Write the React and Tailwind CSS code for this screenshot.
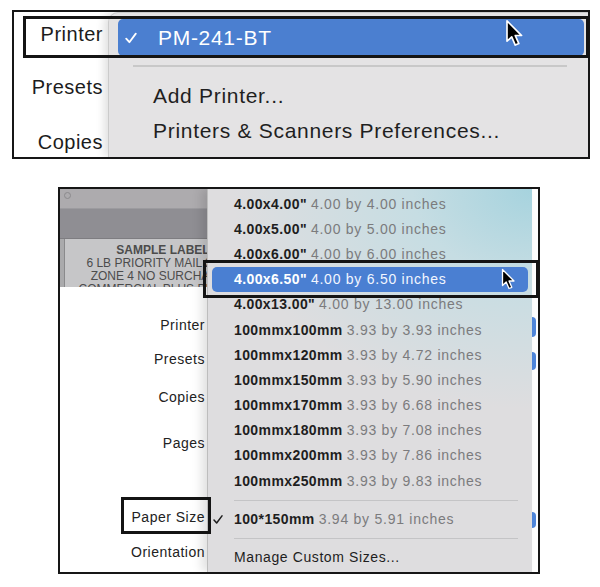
import React from "react";

const Cursor = ({ className }) => (
  <svg className={className} viewBox="0 0 14 22" fill="none">
    <path
      d="M1.5 1.5 L1.5 17.5 L5.2 14 L8 20.5 L10.8 19.3 L8 13 L13 13 Z"
      fill="#000"
      stroke="#fff"
      strokeWidth="1.3"
      strokeLinejoin="round"
    />
  </svg>
);

const Check = ({ className, color }) => (
  <svg className={className} viewBox="0 0 12 12" fill="none">
    <path d="M1.2 6.6 L4.4 10.2 L10.8 1.6" stroke={color} strokeWidth="1.8" strokeLinecap="round" strokeLinejoin="round" />
  </svg>
);

const sizes = [
  ['4.00x4.00"', "4.00 by 4.00 inches"],
  ['4.00x5.00"', "4.00 by 5.00 inches"],
  ['4.00x6.00"', "4.00 by 6.00 inches"],
  ['4.00x6.50"', "4.00 by 6.50 inches", true],
  ['4.00x13.00"', "4.00 by 13.00 inches"],
  ["100mmx100mm", "3.93 by 3.93 inches"],
  ["100mmx120mm", "3.93 by 4.72 inches"],
  ["100mmx150mm", "3.93 by 5.90 inches"],
  ["100mmx170mm", "3.93 by 6.68 inches"],
  ["100mmx180mm", "3.93 by 7.08 inches"],
  ["100mmx200mm", "3.93 by 7.86 inches"],
  ["100mmx250mm", "3.93 by 9.83 inches"],
];

export default function App() {
  return (
    <div className="w-[600px] h-[587px] bg-white relative overflow-hidden font-['Liberation_Sans',Arial,sans-serif]">
      {/* Top panel */}
      <div className="ml-[12px] mt-[10px] w-[578px] h-[149px] border-2 border-[#161616] flex overflow-hidden bg-white">
        <div className="w-[94px] shrink-0 flex flex-col items-end pr-[5px] text-[20px] tracking-[0.5px] text-[#1c1c1c] leading-[24px]">
          <div className="mt-[10px]">Printer</div>
          <div className="mt-[29px]">Presets</div>
          <div className="mt-[31px]">Copies</div>
        </div>
        <div className="flex-1 relative bg-[#e4e3e4] rounded-tl-[10px] border-l border-t border-[#cbcbcb] shadow-[-4px_0_8px_rgba(0,0,0,0.12)] text-[21px] tracking-[0.7px] text-[#1f1f1f]">
          <div className="ml-[9px] mr-[4px] mt-[6px] h-[37px] rounded-[5px] bg-[#4b7fd0] flex items-center text-white">
            <Check className="ml-[7px] w-[12px] h-[12px]" color="#fff" />
            <span className="ml-[21px]">PM-241-BT</span>
          </div>
          <div className="mt-[9px] h-[2px] ml-[24px] w-[434px] bg-[#c8c8c8]" />
          <div className="mt-[14px] h-[30px] leading-[30px] pl-[44px]">Add Printer...</div>
          <div className="mt-[5px] h-[30px] leading-[30px] pl-[44px]">Printers &amp; Scanners Preferences...</div>
        </div>
      </div>

      {/* Bottom panel */}
      <div className="ml-[58px] mt-[28px] w-[482px] h-[387px] border-2 border-[#161616] flex overflow-hidden bg-white">
        <div className="w-[147px] shrink-0 flex flex-col overflow-hidden">
          <div className="h-[19px] shrink-0 bg-[#adabae] pl-[4px] pt-[3px]">
            <div className="w-[7px] h-[7px] rounded-full border border-[#8b8a8d]" />
          </div>
          <div className="h-[30px] shrink-0 bg-[#8f8e93] border-t border-[#9c9b9f]" />
          <div className="h-[49px] shrink-0 bg-[#c6c6c8] flex border-t border-[#7e7d81] overflow-hidden">
            <div className="w-[5px] shrink-0 bg-[#aaaaac] border-r border-[#8a8a8c]" />
            <div className="w-[196px] shrink-0 flex flex-col items-center text-[12px] leading-[13px] text-[#4c4c4c] pt-[5px] whitespace-nowrap">
              <div className="font-bold">SAMPLE LABEL</div>
              <div>6 LB PRIORITY MAIL 2-DAY</div>
              <div>ZONE 4 NO SURCHARGE</div>
              <div>COMMERCIAL PLUS PRICING</div>
            </div>
          </div>
          <div className="flex-1 flex flex-col items-end pr-[2px] text-[14px] tracking-[0.5px] leading-[18px] text-[#222]">
            <div className="mt-[29px]">Printer</div>
            <div className="mt-[16px]">Presets</div>
            <div className="mt-[20px]">Copies</div>
            <div className="mt-[28px]">Pages</div>
            <div className="mt-[56px]">Paper Size</div>
            <div className="mt-[17px]">Orientation</div>
          </div>
        </div>

        <div className="w-[325px] shrink-0 relative border-l border-[#bdbdbd] shadow-[-5px_0_10px_rgba(0,0,0,0.13)] pt-[2.5px] text-[14px] bg-[radial-gradient(ellipse_300px_220px_at_100%_0%,#a6d3de_0%,#c6dde3_40%,#dedddf_100%)]">
          {sizes.map(([a, b, hl]) =>
            hl ? (
              <div key={a} className="h-[25.2px] px-[4px]">
                <div className="h-full rounded-[5px] bg-[#4a7fd2] flex items-center pl-[22px] text-white whitespace-nowrap">
                  <span className="font-bold tracking-[0.4px]">{a}</span>
                  <span className="ml-[4px] tracking-[0.75px] text-[#f2f6ff]">{b}</span>
                </div>
              </div>
            ) : (
              <div key={a} className="h-[25.2px] flex items-center pl-[26px] whitespace-nowrap">
                <span className="font-bold tracking-[0.4px] text-[#1e1e1e]">{a}</span>
                <span className="ml-[4px] tracking-[0.75px] text-[#7b7b7d]">{b}</span>
              </div>
            )
          )}
          <div className="h-[13px] flex items-center pl-[26px]">
            <div className="w-[284px] h-px bg-[#c4c4c6]" />
          </div>
          <div className="h-[25px] relative flex items-center pl-[26px] whitespace-nowrap">
            <Check className="absolute left-[5px] top-[7px] w-[10px] h-[11px]" color="#1e1e1e" />
            <span className="font-bold tracking-[0.4px] text-[#1e1e1e]">100*150mm</span>
            <span className="ml-[4px] tracking-[0.75px] text-[#7b7b7d]">3.94 by 5.91 inches</span>
          </div>
          <div className="h-[13px] flex items-center pl-[26px]">
            <div className="w-[284px] h-px bg-[#c4c4c6]" />
          </div>
          <div className="h-[25px] flex items-center pl-[26px] tracking-[0.6px] text-[#1e1e1e]">
            Manage Custom Sizes...
          </div>
        </div>

        <div className="w-[6px] shrink-0 flex flex-col bg-white">
          <div className="mt-[128px] h-[20px] w-[4px] rounded-r-full bg-[#4f87dc]" />
          <div className="mt-[15px] h-[18px] w-[4px] rounded-r-full bg-[#4f87dc]" />
          <div className="mt-[142px] h-[16px] w-[4px] rounded-r-full bg-[#4f87dc]" />
        </div>
      </div>

      {/* Overlays: highlight boxes and cursors */}
      <div className="absolute left-[23px] top-[16px] w-[566px] h-[42px] border-[3px] border-[#141414]" />
      <Cursor className="absolute left-[505px] top-[19px] w-[18px] h-[28px]" />
      <div className="absolute left-[203px] top-[260px] w-[336px] h-[38px] border-[3px] border-[#141414]" />
      <Cursor className="absolute left-[501px] top-[268px] w-[14px] h-[22px]" />
      <div className="absolute left-[121px] top-[497px] w-[90px] h-[37px] border-[3px] border-[#141414]" />
    </div>
  );
}
